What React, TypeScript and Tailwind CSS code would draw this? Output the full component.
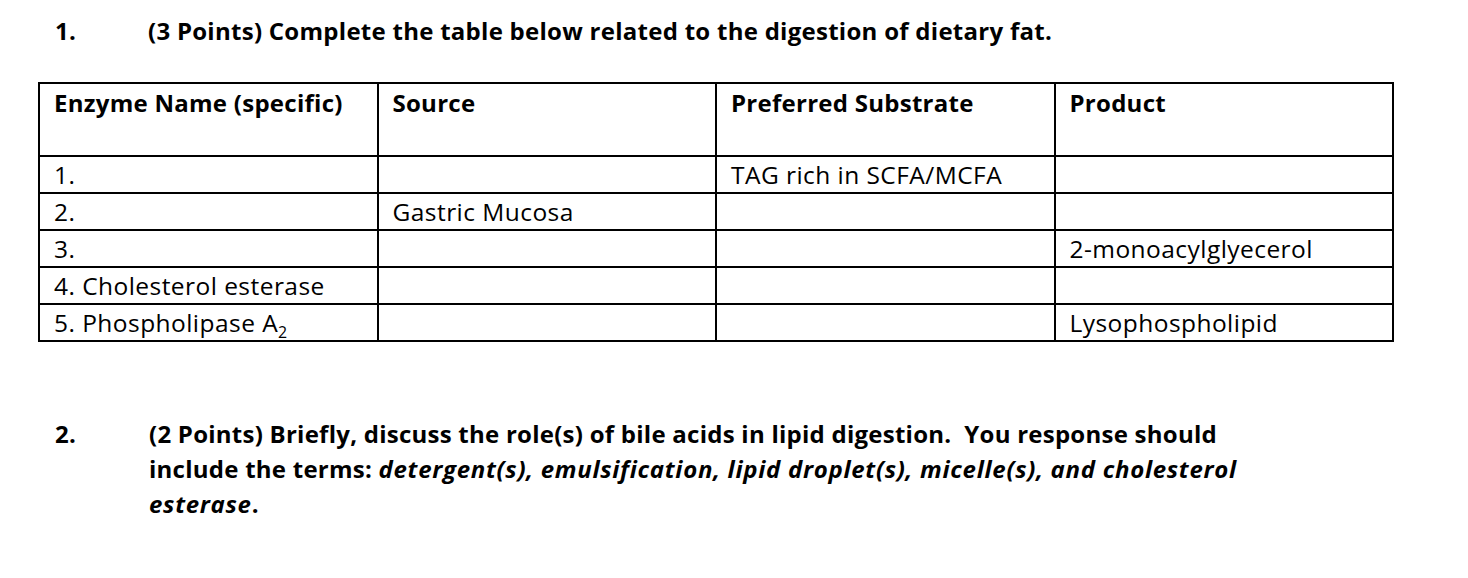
export default function App() {
  const rows: { name: React.ReactNode; source: string; substrate: string; product: string }[] = [
    { name: "1.", source: "", substrate: "TAG rich in SCFA/MCFA", product: "" },
    { name: "2.", source: "Gastric Mucosa", substrate: "", product: "" },
    { name: "3.", source: "", substrate: "", product: "2-monoacylglyecerol" },
    { name: "4. Cholesterol esterase", source: "", substrate: "", product: "" },
    {
      name: (
        <>
          5. Phospholipase A<sub className="text-[0.65em] align-[-0.15em]">2</sub>
        </>
      ),
      source: "",
      substrate: "",
      product: "Lysophospholipid",
    },
  ]

  return (
    <main className="w-[1468px] h-[578px] bg-white text-black font-['Open_Sans',sans-serif] text-[24px]">
      {/* question 1 */}
      <div className="flex pt-[16px] pl-[55px] font-bold leading-[30px] tracking-[0.27px]">
        <div className="w-[93px]">1.</div>
        <div>(3 Points) Complete the table below related to the digestion of dietary fat.</div>
      </div>

      <table className="mt-[36px] ml-[38px] border-collapse table-fixed w-[1356px]">
        <thead>
          <tr className="h-[73px]">
            {["Enzyme Name (specific)", "Source", "Preferred Substrate", "Product"].map((h) => (
              <th
                key={h}
                className="border-2 border-black align-top text-left font-bold pl-[14px] pt-[4px] leading-[30px] tracking-[0.27px]"
              >
                {h}
              </th>
            ))}
          </tr>
        </thead>
        <tbody>
          {rows.map((r, i) => (
            <tr key={i} className="h-[37px]">
              {[r.name, r.source, r.substrate, r.product].map((c, j) => (
                <td
                  key={j}
                  className="border-2 border-black pl-[14px] pt-[1px] leading-[30px] align-middle text-[24.5px] tracking-[0.45px]"
                >
                  {c}
                </td>
              ))}
            </tr>
          ))}
        </tbody>
      </table>

      {/* question 2 */}
      <div className="flex mt-[74px] pl-[55px] font-bold leading-[35px] tracking-[0.25px]">
        <div className="w-[94px] shrink-0">2.</div>
        <div className="w-[1250px]">
          (2 Points) Briefly, discuss the role(s) of bile acids in lipid digestion.&nbsp; You response should
          <br />
          include the terms:{" "}
          <i className="tracking-[0.7px]">detergent(s), emulsification, lipid droplet(s), micelle(s), and cholesterol</i>
          <br />
          <i className="tracking-[0.7px]">esterase</i>.
        </div>
      </div>
    </main>
  )
}
